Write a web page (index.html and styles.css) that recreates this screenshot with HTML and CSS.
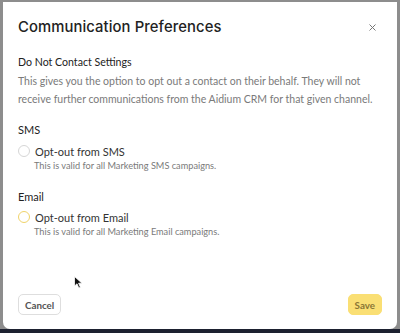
FILE: index.html
```html
<!DOCTYPE html>
<html>
<head>
<meta charset="utf-8">
<link rel="stylesheet" href="styles.css">
</head>
<body>
<div class="modal">
  <div class="header">
    <h1 class="title">Communication Preferences</h1>
    <span class="close">
      <svg width="7" height="7" viewBox="0 0 7 7"><path d="M0.5 0.5L6.5 6.5M6.5 0.5L0.5 6.5" stroke="#777" stroke-width="1"/></svg>
    </span>
  </div>
  <div class="content">
    <h2 class="section">Do Not Contact Settings</h2>
    <p class="desc">This gives you the option to opt out a contact on their behalf. They will not receive further communications from the Aidium CRM for that given channel.</p>
    <div class="group">
      <h3 class="label">SMS</h3>
      <div class="option">
        <span class="radio"></span>
        <span class="opt-text">Opt-out from SMS</span>
      </div>
      <div class="hint">This is valid for all Marketing SMS campaigns.</div>
    </div>
    <div class="group">
      <h3 class="label">Email</h3>
      <div class="option">
        <span class="radio focus"></span>
        <span class="opt-text">Opt-out from Email</span>
      </div>
      <div class="hint">This is valid for all Marketing Email campaigns.</div>
    </div>
  </div>
  <div class="footer">
    <button class="btn cancel">Cancel</button>
    <button class="btn save">Save</button>
  </div>
  <svg class="cursor" width="9" height="13" viewBox="0 0 9 13"><path d="M0.5 0.5L0.5 10L3 7.8L4.8 12L6.4 11.3L4.6 7.2L8 7.2Z" fill="#111" stroke="#fff" stroke-width="0.8"/></svg>
</div>
</body>
</html>
```
FILE: styles.css
```css
html, body {
  margin: 0;
  padding: 0;
}
body {
  width: 400px;
  height: 333px;
  overflow: hidden;
  background: linear-gradient(to bottom, #8d8d8d 329px, #1d2130 329px);
  font-family: Lato, "Open Sans", sans-serif;
}
.modal {
  position: relative;
  box-sizing: border-box;
  margin: 2px 0 0 3px;
  width: 394px;
  height: 327px;
  background: #fff;
  border-radius: 0 0 7px 7px;
  padding: 0 15px;
  display: flex;
  flex-direction: column;
}
.header {
  display: flex;
  align-items: center;
  justify-content: space-between;
  height: 50px;
}
.title {
  margin: 0;
  font-family: Inter, sans-serif;
  font-weight: 500;
  font-size: 14.8px;
  color: #222;
  letter-spacing: 0.1px;
}
.close {
  display: flex;
  margin-right: 6px;
}
.content {
  display: flex;
  flex-direction: column;
}
.section {
  margin: 1px 0 0 0;
  font-size: 10.6px;
  font-weight: 400;
  color: #222;
  line-height: 18px;
}
.desc {
  margin: 1px 0 0 0;
  font-size: 10.5px;
  line-height: 18px;
  color: #7a7a7a;
}
.group {
  margin-top: 13px;
}
.group + .group {
  margin-top: 15px;
}
.label {
  margin: 0;
  font-size: 11px;
  font-weight: 400;
  color: #222;
  line-height: 18px;
}
.option {
  display: flex;
  align-items: center;
  margin-top: 4px;
  height: 16px;
}
.group + .group .option {
  margin-top: 3px;
}
.radio {
  box-sizing: border-box;
  width: 12px;
  height: 12px;
  border: 1px solid #d6d6d6;
  border-radius: 50%;
  margin-right: 5px;
}
.radio.focus {
  border-color: #f0d36a;
}
.opt-text {
  font-size: 11px;
  color: #333;
}
.hint {
  margin: 0 0 0 16px;
  font-size: 9.2px;
  color: #7a7a7a;
  line-height: 14px;
}
.footer {
  margin-top: auto;
  display: flex;
  justify-content: space-between;
  align-items: center;
  padding-bottom: 14px;
}
.btn {
  font-family: Lato, sans-serif;
  font-weight: 700;
  font-size: 9.8px;
  height: 21px;
  border-radius: 5px;
  padding: 0 6px;
  cursor: pointer;
}
.cancel {
  background: #fff;
  border: 1px solid #dedede;
  color: #555;
}
.save {
  background: #fadf74;
  border: 1px solid #fadf74;
  color: #8a7636;
}
.cursor {
  position: absolute;
  left: 71px;
  top: 274px;
}
```
